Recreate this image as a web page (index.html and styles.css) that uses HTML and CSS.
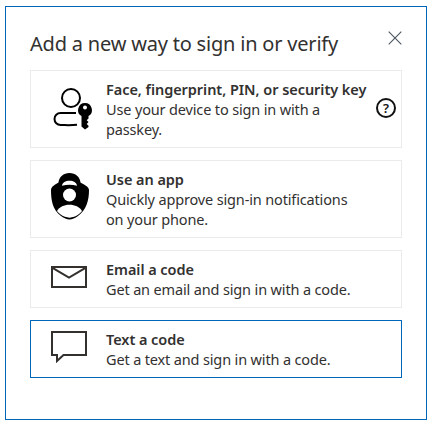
FILE: index.html
```html
<!DOCTYPE html>
<html lang="en">
<head>
<meta charset="utf-8">
<title>Add a new way to sign in or verify</title>
<link rel="stylesheet" href="styles.css">
</head>
<body>
<main class="dialog">
  <header class="head">
    <h1 class="title">Add a new way to sign in or verify</h1>
    <button class="close" aria-label="Close">
      <svg width="14" height="14" viewBox="0 0 14 14"><path d="M.7.7l12.600 12.600M13.300.7L.7 13.300" fill="none" stroke="#4a5560" stroke-width="1.100"/></svg>
    </button>
  </header>
  <div class="list">
    <div class="card tall">
      <svg class="icon key" width="42" height="44" viewBox="0 0 42 44">
        <circle cx="20" cy="11" r="9" fill="none" stroke="#000" stroke-width="2"/>
        <path d="M25 26H9.500a6 6 0 0 0 0 12c5 0 10 .5 16.500-.3" fill="none" stroke="#000" stroke-width="2"/>
        <path d="M34 16a7 7 0 0 1 3.500 13v2.500l-1.800 1.800 1.800 1.800-1.800 1.800 1.800 1.800v1.300L34 42.500l-3.500-3V29a7 7 0 0 1 3.500-13z" fill="#000"/>
        <circle cx="34" cy="20.500" r="2" fill="#fff"/>
      </svg>
      <div class="text">
        <div class="name">Face, fingerprint, PIN, or security key</div>
        <div class="desc">Use your device to sign in with a<br>passkey.</div>
      </div>
      <span class="help">?</span>
    </div>
    <div class="card tall">
      <svg class="icon lock" width="38" height="47" viewBox="0 0 38 47">
        <path d="M18.500 0c6 0 10.500 4 11 9.500 3 2 8.500 4 8.500 7.500 0 10-2.500 20-11 26-6 4.500-11 4.500-17 0C1.500 37 0 27 0 17c0-3.500 4.500-5.500 7.500-7.500C8 4 12.500 0 18.500 0z" fill="#000"/>
        <path d="M11 12.800C11.500 9.500 14.500 7.800 18.500 7.800s7 1.700 7.500 5c-5-1.500-10-1.500-15 0z" fill="#fff"/>
        <circle cx="18.500" cy="22" r="6.500" fill="#fff"/>
        <path d="M6 38c2.500-4 7-6.200 12.500-6.200S28.500 34 31 38c-2 2.500-5.500 6.200-12.500 6.700C11.500 44.200 8 40.500 6 38z" fill="#fff"/>
      </svg>
      <div class="text">
        <div class="name">Use an app</div>
        <div class="desc">Quickly approve sign-in notifications<br>on your phone.</div>
      </div>
    </div>
    <div class="card">
      <svg class="icon envelope" width="36" height="22" viewBox="0 0 36 22">
        <path d="M1 1h34v20H1z" fill="none" stroke="#33302e" stroke-width="2"/>
        <path d="M1.500 1.800L18 11.500 34.500 1.800" fill="none" stroke="#33302e" stroke-width="2"/>
      </svg>
      <div class="text">
        <div class="name">Email a code</div>
        <div class="desc">Get an email and sign in with a code.</div>
      </div>
    </div>
    <div class="card selected">
      <svg class="icon chat" width="36" height="32" viewBox="0 0 36 32">
        <path d="M1 1h34v23H12.500L6 30v-6H1z" fill="none" stroke="#33302e" stroke-width="2"/>
      </svg>
      <div class="text">
        <div class="name">Text a code</div>
        <div class="desc">Get a text and sign in with a code.</div>
      </div>
    </div>
  </div>
</main>
</body>
</html>
```
FILE: styles.css
```css
html, body { margin: 0; padding: 0; background: #fff; }
body { width: 433px; height: 423px; overflow: hidden; font-family: "Noto Sans", "Open Sans", sans-serif; color: #323130; }
.dialog { box-sizing: border-box; width: 422px; height: 414px; margin: 6px 0 0 5px; border: 1px solid #0067b8; background: #fff; padding: 0 24px; }
.head { display: flex; justify-content: space-between; height: 63px; position: relative; }
.title { margin: 22px 0 0; font-size: 20px; line-height: 30px; font-weight: 400; letter-spacing: -.2px; white-space: nowrap; }
.close { position: absolute; right: 0; top: 24px; width: 14px; height: 14px; padding: 0; border: 0; background: none; display: block; }
.close svg { display: block; }
.list { display: flex; flex-direction: column; gap: 12px; }
.card { box-sizing: border-box; height: 58px; width: 372px; border: 1px solid #edebe9; position: relative; display: flex; align-items: flex-start; }
.card.tall { height: 78px; }
.card.selected { border-color: #0067b8; }
.icon { flex: none; margin-left: 20px; }
.key { margin-top: 16px; }
.lock { margin-top: 12px; }
.envelope { margin-top: 15px; }
.chat { margin-top: 10px; }
.text { position: absolute; left: 75px; top: 8px; white-space: nowrap; }
.name { font-size: 14.500px; line-height: 20px; font-weight: 600; letter-spacing: -.05px; }
.desc { font-size: 14.500px; line-height: 20px; letter-spacing: -.15px; }
.help { position: absolute; right: 5px; top: 27px; box-sizing: border-box; width: 20px; height: 20px; border: 2px solid #111; border-radius: 50%; font-size: 13px; line-height: 16px; font-weight: 600; text-align: center; color: #111; }
```
